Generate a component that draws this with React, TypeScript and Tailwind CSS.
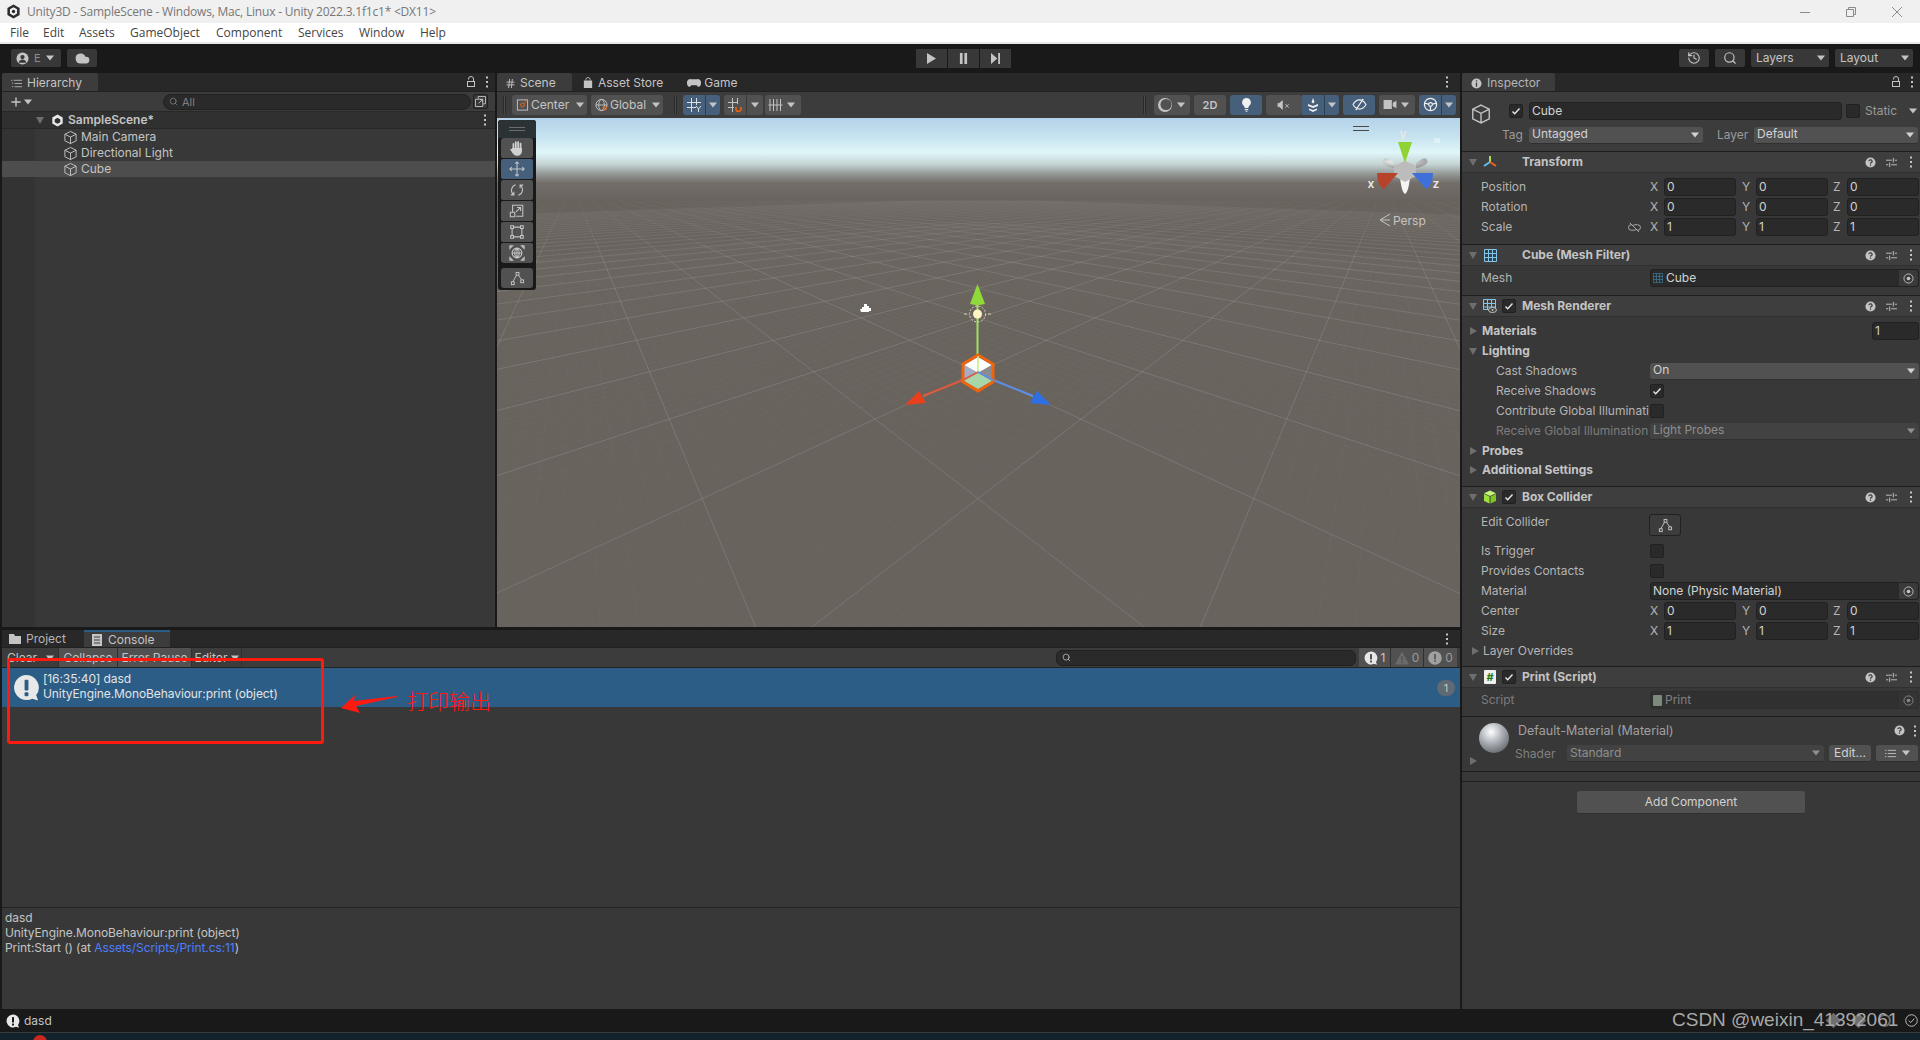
import type { ReactNode } from "react";
import { Search, History, Cloud, Plus, Hash } from "lucide-react";

// shared grid for the scene view: ground plane seen from above, rotated 45deg
const F = 406;
const H = 0.46;
const S = 0.286;
const CX = 978;
const HZ = 185;

function gridLines(step: number, maxC: number, vFar: number) {
  const out: { x1: number; y1: number; x2: number; y2: number; key: string }[] = [];
  const n = Math.round(maxC / step);
  const vNear = 0.12;
  const project = (u: number, v: number) => [CX + (F * u) / v, HZ + (F * H) / v];
  for (let i = -n; i <= n; i++) {
    const c = i * step;
    for (const fam of [1, -1]) {
      // wx = c, wz runs so that v goes from near to far; second family is mirrored
      const end = (v: number) => {
        const wz = (v - 1) * Math.SQRT2 - c;
        const u = (fam * (c - wz)) / Math.SQRT2;
        return project(u, v);
      };
      const [x1, y1] = end(vNear);
      const [x2, y2] = end(vFar);
      out.push({ x1, y1, x2, y2, key: `${fam}-${i}` });
    }
  }
  return out;
}

const minorLines = gridLines(S / 10, 3, 5);
const majorLines = gridLines(S, 9, 12);

function Tri({ dir = "down", className = "" }: { dir?: "down" | "right"; className?: string }) {
  return (
    <svg viewBox="0 0 10 10" className={`w-[10px] h-[10px] shrink-0 ${className}`} fill="currentColor">
      {dir === "down" ? <path d="M1 2h8L5 9z" /> : <path d="M2 1v8l7-4z" />}
    </svg>
  );
}

function Caret({ className = "" }: { className?: string }) {
  return (
    <svg viewBox="0 0 8 6" className={`w-[8px] h-[6px] shrink-0 ${className}`} fill="currentColor">
      <path d="M0 .5h8L4 5.5z" />
    </svg>
  );
}

function Kebab({ className = "" }: { className?: string }) {
  return (
    <svg viewBox="0 0 4 12" className={`w-[4px] h-[12px] shrink-0 ${className}`} fill="#c4c4c4">
      <rect x="1" y="0.5" width="2" height="2" />
      <rect x="1" y="5" width="2" height="2" />
      <rect x="1" y="9.5" width="2" height="2" />
    </svg>
  );
}

function LockOpen({ className = "" }: { className?: string }) {
  return (
    <svg viewBox="0 0 12 12" className={`w-[12px] h-[12px] shrink-0 ${className}`} fill="none" stroke="#c4c4c4">
      <rect x="2.5" y="5.5" width="7" height="5" />
      <path d="M3.500 3.500V3a2.500 2.500 0 0 1 5 0v2.500" />
    </svg>
  );
}

function CubeIcon({ className = "w-[15px] h-[15px]", stroke = "#c4c4c4" }: { className?: string; stroke?: string }) {
  return (
    <svg viewBox="0 0 16 16" className={`shrink-0 ${className}`} fill="none" stroke={stroke} strokeWidth="1">
      <path d="M8 1.500l6 3v7l-6 3-6-3v-7zM2 4.500l6 3 6-3M8 7.500v7" />
    </svg>
  );
}

function Check() {
  return (
    <svg viewBox="0 0 10 10" className="w-[10px] h-[10px]" fill="none" stroke="#e8e8e8" strokeWidth="1.4">
      <path d="M1.500 5.500l2.200 2.200L8.500 2.500" />
    </svg>
  );
}

function CheckBox({ on = false }: { on?: boolean }) {
  return (
    <div className="w-[14px] h-[14px] rounded-[2px] border border-[#212121] flex items-center justify-center shrink-0 bg-[#2a2a2a]">
      {on && <Check />}
    </div>
  );
}

function Help() {
  return (
    <svg viewBox="0 0 12 12" className="w-[11px] h-[11px]">
      <circle cx="6" cy="6" r="5.500" fill="#c4c4c4" />
      <path d="M4.200 4.600a1.800 1.600 0 1 1 2.600 1.500c-.6.4-.8.6-.8 1.200" fill="none" stroke="#3e3e3e" strokeWidth="1.3" />
      <rect x="5.300" y="8.200" width="1.400" height="1.400" fill="#3e3e3e" />
    </svg>
  );
}

function Sliders() {
  return (
    <svg viewBox="0 0 12 12" className="w-[11px] h-[11px]" stroke="#c4c4c4" fill="none">
      <path d="M0 3.500h6.500M9.500 3.500H12M8 1v5M0 8.500h2.500M5.500 8.500H12M4 6v5" />
    </svg>
  );
}

function Target({ dim = false }: { dim?: boolean }) {
  return (
    <div className={`w-[19px] h-full flex items-center justify-center ${dim ? "bg-[#383838] opacity-60" : "bg-[#3a3a3a]"} rounded-r-[3px]`}>
      <svg viewBox="0 0 12 12" className="w-[11px] h-[11px]" fill="none" stroke="#c4c4c4">
        <circle cx="6" cy="6" r="5" />
        <circle cx="6" cy="6" r="2" fill="#c4c4c4" stroke="none" />
      </svg>
    </div>
  );
}

function ObjectField({ children, dim = false }: { children: ReactNode; dim?: boolean }) {
  return (
    <div className={`flex-1 h-[18px] flex items-center justify-between rounded-[3px] border ${dim ? "bg-[#303030] text-[#808080] border-[#2e2e2e]" : "bg-[#2a2a2a] text-[#d2d2d2] border-[#212121]"}`}>
      <div className="flex items-center gap-[3px] pl-[2px]">{children}</div>
      <Target dim={dim} />
    </div>
  );
}

function Dropdown({ label, className = "", dim = false }: { label: string; className?: string; dim?: boolean }) {
  return (
    <div className={`h-[17px] rounded-[3px] flex items-center justify-between pl-[3px] pr-[3px] border-b border-[#303030] ${dim ? "bg-[#424242] text-[#8f8f8f]" : "bg-[#515151] text-[#d2d2d2]"} ${className}`}>
      <span className="leading-none -mt-[1px]">{label}</span>
      <Caret className={dim ? "text-[#8f8f8f] mr-[1px]" : "text-[#d2d2d2] mr-[1px]"} />
    </div>
  );
}

function NumField({ value, className = "w-[72px]" }: { value: string; className?: string }) {
  return (
    <div className={`h-[18px] bg-[#2a2a2a] border border-[#212121] rounded-[3px] flex items-center pl-[2px] text-[#d2d2d2] leading-none ${className}`}>
      {value}
    </div>
  );
}

function VectorFields({ x, y, z }: { x: string; y: string; z: string }) {
  return (
    <div className="flex items-center text-[#b4b4b4]">
      <span className="w-[14px]">X</span>
      <NumField value={x} />
      <span className="w-[14px] ml-[6px]">Y</span>
      <NumField value={y} />
      <span className="w-[14px] ml-[5px]">Z</span>
      <NumField value={z} />
    </div>
  );
}

function Row({ label, indent = false, dim = false, extra, children }: { label: string; indent?: boolean; dim?: boolean; extra?: ReactNode; children?: ReactNode }) {
  return (
    <div className="h-[20px] flex items-center pl-[19px] pr-[1px]">
      <div className={`w-[169px] shrink-0 flex items-center justify-between whitespace-nowrap overflow-hidden ${indent ? "pl-[15px] pr-[2px]" : "pr-[9px]"} ${dim ? "text-[#7c7c7c]" : "text-[#b4b4b4]"}`}>
        <span>{label}</span>
        {extra}
      </div>
      <div className="flex-1 flex items-center min-w-0">{children}</div>
    </div>
  );
}

function Foldout({ label, open = false }: { label: string; open?: boolean }) {
  return (
    <div className="h-[20px] flex items-center pl-[6px]">
      <Tri dir={open ? "down" : "right"} className="text-[#6e6e6e]" />
      <span className="ml-[4px] font-bold text-[#c4c4c4]">{label}</span>
    </div>
  );
}

function CompHeader({ title, icon, check = false }: { title: string; icon: ReactNode; check?: boolean }) {
  return (
    <div className="h-[21px] bg-[#3e3e3e] border-b border-[#303030] flex items-center pl-[6px] pr-[7px]">
      <Tri className="text-[#6e6e6e]" />
      <div className="w-[16px] ml-[4px] flex items-center justify-center">{icon}</div>
      <div className="w-[18px] flex justify-end">{check && <CheckBox on />}</div>
      <span className="ml-[6px] font-bold text-[#c4c4c4]">{title}</span>
      <div className="ml-auto flex items-center gap-[10px]">
        <Help />
        <Sliders />
        <Kebab className="ml-[2px]" />
      </div>
    </div>
  );
}

function MeshGlyph({ stroke = "#7fc7ee", size = 13 }: { stroke?: string; size?: number }) {
  return (
    <svg viewBox="0 0 13 13" width={size} height={size} fill="none" stroke={stroke}>
      <path d="M.5.5h12v12H.5zM4.500.5v12M8.500.5v12M.5 4.500h12M.5 8.500h12" />
    </svg>
  );
}

function InfoBubble({ size = 14, dark = "#191919" }: { size?: number; dark?: string }) {
  return (
    <svg viewBox="0 0 28 28" width={size} height={size}>
      <path d="M14 1a13 13 0 1 0 6 24.600l6 1.900-2-5.600A13 13 0 0 0 14 1z" fill="#e8e8e8" />
      <rect x="12" y="6" width="4" height="11" rx="1" fill={dark} />
      <rect x="12" y="19" width="4" height="4" rx="1" fill={dark} />
    </svg>
  );
}

function TabBar({ children, right, className = "h-[19px]" }: { children: ReactNode; right?: ReactNode; className?: string }) {
  return (
    <div className={`bg-[#282828] flex items-end border-b border-[#212121] shrink-0 ${className}`}>
      {children}
      <div className="ml-auto self-center flex items-center gap-[8px] pr-[6px]">{right}</div>
    </div>
  );
}

function ToolBtn({ children, active = false, className = "" }: { children: ReactNode; active?: boolean; className?: string }) {
  return (
    <div className={`h-[20px] rounded-[3px] flex items-center justify-center text-[#c4c4c4] shrink-0 ${active ? "bg-[#46607c]" : "bg-[#515151]"} ${className}`}>
      {children}
    </div>
  );
}

const Grip = () => <div className="w-[3px] h-[18px] border-x border-[#2a2a2a] bg-[#4a4a4a] shrink-0" />;

function HierRow({ label, selected = false }: { label: string; selected?: boolean }) {
  return (
    <div className={`h-[16px] flex items-center pl-[61px] ${selected ? "bg-[#4d4d4d]" : ""}`}>
      <CubeIcon />
      <span className="ml-[3px] text-[#c4c4c4]">{label}</span>
    </div>
  );
}

function ToolOverlayBtn({ children, active = false, className = "" }: { children: ReactNode; active?: boolean; className?: string }) {
  return (
    <div className={`w-[32px] h-[20px] rounded-[2px] flex items-center justify-center ${active ? "bg-[#46607c]" : "bg-[#515151]"} ${className}`}>
      {children}
    </div>
  );
}

function ToolGlyph({ d }: { d: string }) {
  return (
    <svg viewBox="0 0 18 18" className="w-[16px] h-[16px]" fill="none" stroke="#c4c4c4" strokeWidth="1.2">
      <path d={d} />
    </svg>
  );
}

function HandGlyph() {
  return (
    <svg viewBox="0 0 18 18" className="w-[16px] h-[16px]" fill="none" stroke="#d0d0d0" strokeLinecap="round">
      <path d="M5 10V4.500M7.700 9V2.500M10.300 9V2.500M13 10V4" strokeWidth="2" />
      <path d="M4 9.500h10v3q-.5 4.500-4.500 4.500h-1.500q-2 0-3-2L2 10.500" fill="#d0d0d0" strokeWidth="1.200" />
    </svg>
  );
}

function EditGlyph() {
  return (
    <svg viewBox="0 0 16 16" className="w-[15px] h-[15px]" fill="none" stroke="#c4c4c4">
      <rect x="1.500" y="11.500" width="3" height="3" />
      <rect x="11.500" y="9.500" width="3" height="3" />
      <rect x="6.500" y="1.500" width="3" height="3" />
      <path d="M3 11.500L7 4.500M9 4.500l3.500 5" />
    </svg>
  );
}

function SceneDrawing() {
  return (
    <svg viewBox="497 118 963 509" className="block w-full h-full" preserveAspectRatio="none">
      <defs>
        <linearGradient id="sky" x1="0" y1="118" x2="0" y2="200" gradientUnits="userSpaceOnUse">
          <stop offset="0" stopColor="#b4d2ea" />
          <stop offset="0.22" stopColor="#c6e2ef" />
          <stop offset="0.42" stopColor="#dff6f8" />
          <stop offset="0.56" stopColor="#c6d5d5" />
          <stop offset="0.68" stopColor="#959998" />
          <stop offset="0.79" stopColor="#736e6a" />
          <stop offset="1" stopColor="#69635e" />
        </linearGradient>
        <linearGradient id="haze" x1="0" y1="200" x2="0" y2="265" gradientUnits="userSpaceOnUse">
          <stop offset="0" stopColor="#69635e" stopOpacity="0.75" />
          <stop offset="1" stopColor="#69635e" stopOpacity="0" />
        </linearGradient>
        <radialGradient id="ball" cx="0.35" cy="0.3" r="0.8">
          <stop offset="0" stopColor="#ffffff" />
          <stop offset="1" stopColor="#8e8e8e" />
        </radialGradient>
      </defs>
      <rect x="497" y="118" width="963" height="509" fill="#69635e" />
      {minorLines.map((l) => (
        <line key={`m${l.key}`} x1={l.x1} y1={l.y1} x2={l.x2} y2={l.y2} stroke="#ffffff" strokeOpacity="0.02" />
      ))}
      {majorLines.map((l) => (
        <line key={`M${l.key}`} x1={l.x1} y1={l.y1} x2={l.x2} y2={l.y2} stroke="#ffffff" strokeOpacity="0.11" />
      ))}
      <rect x="497" y="200" width="963" height="65" fill="url(#haze)" />
      <rect x="497" y="118" width="963" height="82" fill="url(#sky)" />

      {/* camera gizmo */}
      <path d="M860 309h2v-2h2v-3h3v2h2v2h2v3h-2v1h-8z" fill="#ffffff" />

      {/* move handles */}
      <path d="M977.500 304V356" stroke="#a4e05a" strokeWidth="2" />
      <path d="M977.500 284L970 304q7.500 2 15 0z" fill="#8fd93a" />
      <path d="M963 380L923 396" stroke="#dd5a3c" strokeWidth="2" />
      <path d="M905 405L919 391l7 12z" fill="#e8401c" />
      <path d="M993 380L1033 396" stroke="#5d8de8" strokeWidth="2" />
      <path d="M1051 405L1037 391l-7 12z" fill="#2f6fe6" />

      {/* sun */}
      <circle cx="977.500" cy="314" r="4.500" fill="#fbf3c4" />
      <g stroke="#ddd6b8" strokeWidth="1" strokeDasharray="2 1.500">
        <circle cx="977.500" cy="314" r="8" fill="none" />
      </g>
      <path d="M967 314h-3M991 314h-3" stroke="#ddd6b8" />

      {/* cube */}
      <path d="M978 357l14 8-14 8-14-8z" fill="#ffffff" />
      <path d="M964 365l14 8v16l-14-8z" fill="#a3aec8" />
      <path d="M992 365l-14 8v16l14-8z" fill="#8f8a8e" />
      <path d="M978 373l14 8-14 8-14-8z" fill="#a7d7a8" />
      <path d="M978 355l15 9v18l-15 9-15-9v-18z" fill="none" stroke="#f0640f" strokeWidth="3" />
      <path d="M978 372v-16" stroke="#bdf07a" strokeWidth="1.500" />
      <path d="M978 372l-15 8" stroke="#dd5a3c" strokeWidth="1.500" />
      <path d="M978 372l15 8" stroke="#5d8de8" strokeWidth="1.500" />

      {/* orientation gizmo */}
      <path d="M1353 126.500h16M1353 130.500h16" stroke="#4a4a4a" />
      <path d="M1394 163c-5-4-9-6-11-3-2 3 3 7 11 8zM1416 163c5-4 9-6 11-3 2 3-3 7-11 8z" fill="url(#ball)" />
      <path d="M1400 178c1 7 2 14 5 16 3-2 4-9 5-16z" fill="#f4f4f4" />
      <path d="M1405 161l11 5v10l-11 6-11-6v-10z" fill="#bcbcbc" />
      <path d="M1398 142h14l-7 21z" fill="#8ed331" />
      <path d="M1377 173h21l-14 16q-7-4-7-16z" fill="#b8432b" />
      <path d="M1412 173h21q0 12-7 16z" fill="#3f6fd8" />
      <rect x="1434" y="138" width="6" height="5" fill="#ffffff" fillOpacity="0.35" />
      <g fontFamily="Inter, sans-serif" fontSize="12" fill="#e8e8e8" fontWeight="600" textAnchor="middle">
        <text x="1403" y="138">y</text>
        <text x="1371" y="188">x</text>
        <text x="1436" y="188">z</text>
      </g>
      <path d="M1390 214l-10 6 10 6M1390 220h-9" fill="none" stroke="#c4c4c4" />
      <text x="1393" y="225" fontFamily="Inter, sans-serif" fontSize="12" fill="#c8c4c0">Persp</text>
    </svg>
  );
}

export default function App() {
  return (
    <div className="w-[1920px] h-[1040px] flex flex-col overflow-hidden bg-[#191919] font-[Inter,sans-serif] text-[12px] text-[#c4c4c4] leading-[16px]">
      {/* Window title */}
      <div className="h-[23px] shrink-0 bg-[#f0f0f0] flex items-center pl-[6px] font-['Open_Sans',sans-serif] text-[12px] text-[#777777]">
        <svg viewBox="0 0 16 16" className="w-[15px] h-[15px]">
          <path d="M8 .5l6.500 3.700v7.600L8 15.500 1.500 11.800V4.200z" fill="#2b2b2b" />
          <path d="M8 3.500l3.800 2.200v4.500L8 12.500l-3.800-2.300V5.700z" fill="#f0f0f0" />
          <circle cx="8" cy="8" r="1.800" fill="#2b2b2b" />
        </svg>
        <span className="ml-[6px] tracking-[-0.2px]">Unity3D - SampleScene - Windows, Mac, Linux - Unity 2022.3.1f1c1* &lt;DX11&gt;</span>
        <div className="ml-auto flex items-center gap-[36px] pr-[18px]">
          <svg viewBox="0 0 10 10" className="w-[10px] h-[10px]" stroke="#8a8a8a" fill="none"><path d="M0 5.500h10" /></svg>
          <svg viewBox="0 0 10 10" className="w-[10px] h-[10px]" stroke="#8a8a8a" fill="none"><path d="M.5 2.500h7v7h-7zM2.500 2.500v-2h7v7h-2" /></svg>
          <svg viewBox="0 0 10 10" className="w-[10px] h-[10px]" stroke="#8a8a8a" fill="none"><path d="M0 0l10 10M10 0L0 10" /></svg>
        </div>
      </div>

      {/* Menu */}
      <div className="h-[19px] shrink-0 bg-white flex items-center font-['Open_Sans',sans-serif] text-[12px] text-[#444444]">
        {[
          ["File", "w-[33px]"],
          ["Edit", "w-[36px]"],
          ["Assets", "w-[51px]"],
          ["GameObject", "w-[86px]"],
          ["Component", "w-[82px]"],
          ["Services", "w-[61px]"],
          ["Window", "w-[61px]"],
          ["Help", "w-[40px]"],
        ].map(([m, w], i) => (
          <span key={m} className={`${w} ${i === 0 ? "ml-[10px]" : ""}`}>{m}</span>
        ))}
      </div>

      {/* Main toolbar */}
      <div className="h-[31px] shrink-0 bg-[#191919] border-t-2 border-white/90 flex items-center pl-[11px] pr-[7px] pb-[1px] relative">
        <div className="w-[50px] h-[18px] bg-[#383838] rounded-[2px] flex items-center pl-[5px] gap-[5px]">
          <svg viewBox="0 0 14 14" className="w-[13px] h-[13px]"><circle cx="7" cy="7" r="6.500" fill="#c4c4c4" /><circle cx="7" cy="5.500" r="2.300" fill="#383838" /><path d="M2.800 11.500c.6-2.500 2.500-3.500 4.200-3.500s3.600 1 4.200 3.500z" fill="#383838" /></svg>
          <span className="text-[#8f8f8f] text-[11px]">E</span>
          <Caret className="text-[#c4c4c4] w-[7px]" />
        </div>
        <div className="ml-[6px] w-[30px] h-[18px] bg-[#383838] rounded-[2px] flex items-center justify-center">
          <Cloud size={15} fill="#c4c4c4" stroke="#c4c4c4" />
        </div>
        <div className="ml-[819px] flex gap-[1px]">
          <div className="w-[31px] h-[19px] bg-[#383838] flex items-center justify-center"><svg viewBox="0 0 10 12" className="w-[9px] h-[11px]" fill="#c4c4c4"><path d="M0 0l10 6-10 6z" /></svg></div>
          <div className="w-[31px] h-[19px] bg-[#383838] flex items-center justify-center"><svg viewBox="0 0 10 12" className="w-[9px] h-[11px]" fill="#c4c4c4"><path d="M1 0h3v12H1zM6 0h3v12H6z" /></svg></div>
          <div className="w-[31px] h-[19px] bg-[#383838] flex items-center justify-center"><svg viewBox="0 0 10 12" className="w-[9px] h-[11px]" fill="#c4c4c4"><path d="M0 0l7 6-7 6zM8 0h2v12H8z" /></svg></div>
        </div>
        <div className="ml-auto flex items-center gap-[6px]">
          <div className="w-[30px] h-[18px] bg-[#383838] rounded-[2px] flex items-center justify-center"><History size={14} /></div>
          <div className="w-[30px] h-[18px] bg-[#383838] rounded-[2px] flex items-center justify-center"><Search size={14} /></div>
          <div className="w-[78px] h-[18px] bg-[#383838] rounded-[2px] flex items-center justify-between pl-[5px] pr-[4px]"><span>Layers</span><Caret /></div>
          <div className="w-[78px] h-[18px] bg-[#383838] rounded-[2px] flex items-center justify-between pl-[5px] pr-[4px]"><span>Layout</span><Caret /></div>
        </div>
      </div>

      <div className="flex-1 min-h-0 flex pl-[2px]">
        {/* Left + centre + console */}
        <div className="w-[1458px] shrink-0 flex flex-col">
          <div className="h-[554px] shrink-0 flex">
            {/* Hierarchy */}
            <div className="w-[493px] shrink-0 flex flex-col bg-[#383838]">
              <TabBar right={<><LockOpen /><Kebab /></>}>
                <div className="w-[96px] h-full bg-[#3c3c3c] rounded-t-[2px] flex items-center pl-[9px] pt-[2px] gap-[5px]">
                  <svg viewBox="0 0 12 12" className="w-[11px] h-[11px]" stroke="#b4b4b4" fill="none"><path d="M3 2.500h9M4 6h8M4 9.500h8M0 2.500h1.500M1 5.500h1.500M1 9.500h1.500" /></svg>
                  <span>Hierarchy</span>
                </div>
              </TabBar>
              <div className="h-[20px] bg-[#3c3c3c] flex items-center border-b border-[#282828] pl-[7px]">
                <Plus size={14} strokeWidth={2.4} />
                <Caret className="ml-[1px] w-[7px]" />
                <div className="ml-[131px] w-[308px] h-[16px] bg-[#2a2a2a] rounded-[8px] border border-[#212121] flex items-center pl-[5px] text-[#808080] gap-[4px]">
                  <Search size={9} />
                  <span className="text-[11px]">All</span>
                </div>
                <div className="ml-[2px] w-[15px] h-[15px] bg-[#383838] border border-[#212121] rounded-[2px] flex items-center justify-center">
                  <svg viewBox="0 0 12 12" className="w-[11px] h-[11px]" fill="none" stroke="#c4c4c4"><path d="M3.500 3V.5h8v8H9M.5 3.500h8v8h-8zM4 8l4-4M5.500 4H8v2.500" /></svg>
                </div>
              </div>
              <div className="flex-1 flex relative">
                <div className="w-[33px] bg-[#333333] shrink-0" />
                <div className="absolute inset-0">
                  <div className="h-[17px] bg-[#303030] border-b border-[#282828] flex items-center pl-[33px] pr-[8px]">
                    <Tri className="text-[#6e6e6e] w-[9px] h-[9px]" />
                    <svg viewBox="0 0 14 14" className="ml-[6px] w-[13px] h-[13px]"><path d="M7 .5l5.600 3.200v6.600L7 13.500 1.400 10.300V3.700z" fill="#e8e8e8" /><path d="M7 4L10 5.800v3L7 10.500 4 8.800v-3z" fill="#303030" /></svg>
                    <span className="ml-[4px] font-semibold">SampleScene*</span>
                    <Kebab className="ml-auto" />
                  </div>
                  <HierRow label="Main Camera" />
                  <HierRow label="Directional Light" />
                  <HierRow label="Cube" selected />
                </div>
              </div>
            </div>
            <div className="w-[2px] bg-[#191919] shrink-0" />

            {/* Scene */}
            <div className="flex-1 min-w-0 flex flex-col">
              <TabBar right={<Kebab className="mr-[5px]" />}>
                <div className="w-[75px] h-full bg-[#3c3c3c] rounded-t-[2px] flex items-center pl-[8px] pt-[2px] gap-[4px]">
                  <Hash size={11} />
                  <span>Scene</span>
                </div>
                <div className="h-full flex items-center pl-[11px] pt-[2px] gap-[5px]">
                  <svg viewBox="0 0 12 14" className="w-[10px] h-[12px]"><path d="M1 4h10v9H1z" fill="#c4c4c4" /><path d="M3.500 4V2.500a2.500 2 0 0 1 5 0V4" fill="none" stroke="#c4c4c4" /></svg>
                  <span>Asset Store</span>
                </div>
                <div className="h-full flex items-center pl-[24px] pt-[2px] gap-[3px]">
                  <svg viewBox="0 0 16 10" className="w-[14px] h-[9px]"><path d="M4 0h8a4 4 0 0 1 4 5c-.3 3-2 5-4 3l-1-1H5L4 8C2 10 .3 8 0 5a4 4 0 0 1 4-5z" fill="#c4c4c4" /></svg>
                  <span>Game</span>
                </div>
              </TabBar>
              <div className="h-[26px] bg-[#3c3c3c] flex items-center shrink-0 pb-[1px] pl-[6px] pr-[4px]">
                <Grip />
                <ToolBtn className="ml-[6px] w-[75px] justify-start pl-[4px] gap-[2px]">
                  <svg viewBox="0 0 14 14" className="w-[13px] h-[14px]" fill="none"><rect x="1.500" y="1.500" width="11" height="11" stroke="#c4c4c4" /><circle cx="7" cy="7" r="2" stroke="#f0640f" /><path d="M8.500 5.500L12 2" stroke="#f0640f" /></svg>
                  <span>Center</span>
                  <Caret className="ml-auto mr-[3px]" />
                </ToolBtn>
                <ToolBtn className="ml-[4px] w-[72px] justify-start pl-[4px] gap-[2px]">
                  <svg viewBox="0 0 14 14" className="w-[13px] h-[14px]" fill="none" stroke="#c4c4c4"><circle cx="7" cy="7" r="6" /><ellipse cx="7" cy="7" rx="3" ry="6" /><path d="M1 7h12" /><circle cx="10.500" cy="10.500" r="2" stroke="#f0640f" /></svg>
                  <span>Global</span>
                  <Caret className="ml-auto mr-[3px]" />
                </ToolBtn>
                <div className="ml-[11px]"><Grip /></div>
                <ToolBtn active className="ml-[6px] w-[37px] justify-start">
                  <div className="w-[23px] flex justify-center border-r border-[#2d3f52] h-full items-center">
                    <svg viewBox="0 0 14 14" className="w-[14px] h-[14px]" fill="none" stroke="#e0e0e0"><path d="M0 4.500h14M0 9.500h9M4.500 0v14M9.500 0v7" /><path d="M9 8l2.500 3L14 8M11.500 11v3" /></svg>
                  </div>
                  <Caret className="ml-[3px]" />
                </ToolBtn>
                <ToolBtn className="ml-[4px] w-[39px] justify-start">
                  <div className="w-[23px] flex justify-center border-r border-[#3a3a3a] h-full items-center">
                    <svg viewBox="0 0 14 14" className="w-[14px] h-[14px]" fill="none" stroke="#c4c4c4"><path d="M0 4.500h10M0 9.500h6M4.500 0v14M9.500 0v6" /><path d="M8 9v2a2.500 2.500 0 0 0 5 0V9" stroke="#f0640f" strokeWidth="1.500" /></svg>
                  </div>
                  <Caret className="ml-[4px]" />
                </ToolBtn>
                <ToolBtn className="ml-[2px] w-[36px] justify-start pl-[3px]">
                  <svg viewBox="0 0 14 14" className="w-[15px] h-[14px]" fill="none" stroke="#c4c4c4"><path d="M1.500 1v12M5 1v12M8.500 1v12M12 1v12M0 7h14" /></svg>
                  <Caret className="ml-[4px]" />
                </ToolBtn>
                <div className="ml-auto mr-[8px]"><Grip /></div>
                <ToolBtn className="w-[36px] justify-start pl-[3px]">
                  <svg viewBox="0 0 16 16" className="w-[16px] h-[16px]"><circle cx="8" cy="8" r="7" fill="#c4c4c4" /><circle cx="9" cy="7.500" r="5.500" fill="#515151" /></svg>
                  <Caret className="ml-[4px]" />
                </ToolBtn>
                <ToolBtn className="ml-[4px] w-[32px]"><span className="text-[11px] font-semibold">2D</span></ToolBtn>
                <ToolBtn active className="ml-[4px] w-[32px]">
                  <svg viewBox="0 0 12 16" className="w-[11px] h-[14px]" fill="#f0f0f0"><path d="M6 0a5 5 0 0 1 3 9c-.7.6-1 1.500-1 2.500H4c0-1-.3-1.900-1-2.500A5 5 0 0 1 6 0zM4 12.500h4V14H4zM5 15h2v1H5z" /></svg>
                </ToolBtn>
                <ToolBtn className="ml-[4px] w-[36px]">
                  <svg viewBox="0 0 16 14" className="w-[14px] h-[12px]" fill="none" stroke="#c4c4c4"><path d="M1 5h2l3-3v10L3 9H1z" fill="#c4c4c4" /><path d="M9.500 6l4 4M13.500 6l-4 4" /></svg>
                </ToolBtn>
                <ToolBtn active className="w-[37px] justify-start rounded-l-none">
                  <div className="w-[23px] flex justify-center border-r border-[#2d3f52] h-full items-center">
                    <svg viewBox="0 0 14 14" className="w-[14px] h-[14px]" fill="#f0f0f0"><path d="M7 0l1.500 4L7 5.500 5.500 4zM2 6l5 2 5-2v2l-5 2-5-2zM3 10.500l4 1.500 4-1.500V12l-4 2-4-2z" /></svg>
                  </div>
                  <Caret className="ml-[3px]" />
                </ToolBtn>
                <ToolBtn active className="ml-[4px] w-[32px]">
                  <svg viewBox="0 0 16 14" className="w-[15px] h-[13px]" fill="none" stroke="#f0f0f0" strokeWidth="1.200"><path d="M1 7c2-3.500 4.500-5 7-5s5 1.500 7 5c-2 3.500-4.500 5-7 5s-5-1.500-7-5zM12 1L4 13" /></svg>
                </ToolBtn>
                <ToolBtn className="ml-[4px] w-[36px] justify-start pl-[4px]">
                  <svg viewBox="0 0 14 12" className="w-[14px] h-[11px]" fill="#c4c4c4"><path d="M0 1h9v10H0zM10 4l4-2v8l-4-2z" /></svg>
                  <Caret className="ml-[4px]" />
                </ToolBtn>
                <ToolBtn active className="ml-[4px] w-[37px] justify-start">
                  <div className="w-[23px] flex justify-center border-r border-[#2d3f52] h-full items-center">
                    <svg viewBox="0 0 16 16" className="w-[15px] h-[15px]" fill="none" stroke="#f0f0f0" strokeWidth="1.300"><circle cx="8" cy="8" r="6.500" /><circle cx="8" cy="8" r="2" /><path d="M1.500 6.500L6 7.500M14.500 6.500L10 7.500M8 10v4.500" /></svg>
                  </div>
                  <Caret className="ml-[3px]" />
                </ToolBtn>
              </div>
              <div className="flex-1 min-h-0 relative bg-[#69635e]">
                <SceneDrawing />
                {/* tools overlay */}
                <div className="absolute left-[1px] top-[2px] w-[38px] h-[170px] bg-[#191919] rounded-[3px] flex flex-col items-center">
                  <div className="w-full h-[18px] bg-[#2a3236] rounded-t-[3px] flex flex-col items-center justify-center gap-[2px]">
                    <div className="w-[16px] h-[1px] bg-[#6b6b6b]" />
                    <div className="w-[16px] h-[1px] bg-[#6b6b6b]" />
                  </div>
                  <div className="flex flex-col gap-[1px]">
                    <ToolOverlayBtn className="rounded-t-[3px]"><HandGlyph /></ToolOverlayBtn>
                    <ToolOverlayBtn active>
                      <ToolGlyph d="M9 1v16M1 9h16M7 3l2-2 2 2M7 15l2 2 2-2M3 7L1 9l2 2M15 7l2 2-2 2" />
                    </ToolOverlayBtn>
                    <ToolOverlayBtn>
                      <ToolGlyph d="M7.500 3A6.500 6.500 0 0 0 5.500 14.500M5.500 11v3.500H2M10.500 15A6.500 6.500 0 0 0 12.500 3.500M12.500 7V3.500H16" />
                    </ToolOverlayBtn>
                    <ToolOverlayBtn>
                      <ToolGlyph d="M4 10V2.500h11.500V15H8M1.500 10.500h5v5h-5zM8 10l5-5M9 5h4v4" />
                    </ToolOverlayBtn>
                    <ToolOverlayBtn>
                      <ToolGlyph d="M2 2h3v3H2zM13 2h3v3h-3zM2 13h3v3H2zM13 13h3v3h-3zM5 3.500h8M5 14.500h8M3.500 5v8M14.500 5v8" />
                    </ToolOverlayBtn>
                    <ToolOverlayBtn className="rounded-b-[3px]">
                      <ToolGlyph d="M9 3.500a5.500 5.500 0 1 0 0 11 5.500 5.500 0 0 0 0-11zM9 3.500v11M3.500 9h11M9 3.500c-3.500 3-3.500 8 0 11M9 3.500c3.500 3 3.500 8 0 11M1 1h3L1 4zM17 1v3l-3-3zM1 17v-3l3 3zM17 17h-3l3-3z" />
                    </ToolOverlayBtn>
                  </div>
                  <ToolOverlayBtn className="mt-[5px] rounded-[3px]"><EditGlyph /></ToolOverlayBtn>
                </div>
              </div>
            </div>
          </div>
          <div className="h-[3px] bg-[#191919] shrink-0" />

          {/* Console */}
          <div className="flex-1 min-h-0 flex flex-col bg-[#383838] relative">
            <TabBar right={<Kebab className="mr-[5px]" />} className="h-[18px]">
              <div className="w-[82px] h-full flex items-center pl-[7px] gap-[5px] text-[#b4b4b4]">
                <svg viewBox="0 0 12 10" className="w-[12px] h-[10px]" fill="#c4c4c4"><path d="M0 0h5l1 2h6v8H0z" /></svg>
                <span>Project</span>
              </div>
              <div className="w-[86px] h-full bg-[#3c3c3c] border-t-2 border-[#2c5d87] flex items-center pl-[8px] gap-[6px]">
                <svg viewBox="0 0 10 12" className="w-[10px] h-[12px]"><rect width="10" height="12" fill="#c4c4c4" /><path d="M2 3h6M2 6h6M2 9h6" stroke="#3c3c3c" /></svg>
                <span>Console</span>
              </div>
            </TabBar>
            <div className="h-[20px] bg-[#3c3c3c] flex items-center border-b border-[#232323] shrink-0">
              <div className="w-[57px] h-full pl-[5px] flex items-center border-r border-[#303030]">
                <span className="w-[35px]">Clear</span>
                <Caret className="ml-[4px]" />
              </div>
              <div className="w-[59px] h-full bg-[#515151] flex items-center justify-center border-r border-[#303030]">Collapse</div>
              <div className="w-[74px] h-full bg-[#515151] flex items-center justify-center border-r border-[#303030]">Error Pause</div>
              <div className="w-[50px] h-full flex items-center justify-center gap-[3px] border-r border-[#303030]">Editor <Caret /></div>
              <div className="ml-[814px] w-[300px] h-[16px] bg-[#2a2a2a] border border-[#212121] rounded-[6px] flex items-center pl-[5px]">
                <Search size={9} />
              </div>
              <div className="ml-[3px] flex h-full">
                <div className="w-[32px] bg-[#515151] border-r border-[#303030] flex items-center justify-center gap-[3px]"><InfoBubble size={14} dark="#515151" /><span className="text-[#c4c4c4]">1</span></div>
                <div className="w-[33px] bg-[#515151] border-r border-[#303030] flex items-center justify-center gap-[3px]">
                  <svg viewBox="0 0 14 14" className="w-[14px] h-[14px]"><path d="M7 .5L14 13.500H0z" fill="#6b6b6b" /><path d="M6.300 5h1.400v4.500H6.300zM6.300 10.500h1.400V12H6.300z" fill="#515151" /></svg>
                  <span className="text-[#9a9a9a]">0</span>
                </div>
                <div className="w-[33px] bg-[#515151] flex items-center justify-center gap-[3px]">
                  <svg viewBox="0 0 14 14" className="w-[14px] h-[14px]"><circle cx="7" cy="7" r="6.800" fill="#a0a0a0" /><path d="M6.200 3h1.600v5.500H6.200zM6.200 9.500h1.600V11H6.200z" fill="#515151" /></svg>
                  <span className="text-[#9a9a9a]">0</span>
                </div>
              </div>
            </div>
            <div className="h-[39px] bg-[#2c5d87] flex items-center pl-[11px] pr-[5px] shrink-0">
              <InfoBubble size={27} dark="#2c5d87" />
              <div className="ml-[3px] -mt-[3px] text-[#e4e4e4] leading-[15px] tracking-[-0.08px]">
                <div>[16:35:40] dasd</div>
                <div>UnityEngine.MonoBehaviour:print (object)</div>
              </div>
              <div className="ml-auto w-[18px] h-[16px] rounded-full bg-[#5f6a72] flex items-center justify-center text-[#c4c4c4] text-[11px]">1</div>
            </div>
            <div className="flex-1" />
            <div className="h-[102px] shrink-0 border-t border-[#232323] pl-[3px] pt-[2px] text-[#c4c4c4] leading-[15px] tracking-[-0.08px]">
              <div>dasd</div>
              <div>UnityEngine.MonoBehaviour:print (object)</div>
              <div>Print:Start () (at <span className="text-[#4c7eff]">Assets/Scripts/Print.cs:11</span>)</div>
            </div>

            {/* annotation drawn over the screenshot */}
            <div className="absolute left-[5px] top-[28px] w-[317px] h-[86px] border-[3px] border-[#ff1a0f] rounded-[3px]" />
            <svg viewBox="0 0 60 20" className="absolute left-[339px] top-[64px] w-[60px] h-[20px]"><path d="M0 14L14 1l-1 6 43-5v1L15 12l4 7z" fill="#ff1a0f" /></svg>
            <span className="absolute left-[405px] top-[56px] text-[21px] leading-[28px] text-[#ff1a0f] font-['Noto_Sans_CJK_SC',sans-serif] font-light">打印输出</span>
          </div>
        </div>
        <div className="w-[2px] bg-[#191919] shrink-0" />

        {/* Inspector */}
        <div className="flex-1 min-w-0 flex flex-col bg-[#383838]">
          <TabBar right={<><LockOpen /><Kebab /></>}>
            <div className="w-[93px] h-full bg-[#3c3c3c] rounded-t-[2px] flex items-center pl-[9px] pt-[2px] gap-[5px] text-[#b4b4b4]">
              <svg viewBox="0 0 12 12" className="w-[11px] h-[11px]"><circle cx="6" cy="6" r="5.500" fill="#c4c4c4" /><path d="M5.300 2.500h1.400v1.400H5.300zM5.300 5h1.400v4.500H5.300z" fill="#3c3c3c" /></svg>
              <span>Inspector</span>
            </div>
          </TabBar>

          {/* object header */}
          <div className="h-[59px] bg-[#3c3c3c] flex shrink-0">
            <div className="w-[40px] pl-[8px] pt-[11px] relative">
              <CubeIcon className="w-[22px] h-[22px]" />
            </div>
            <div className="flex-1 min-w-0 pt-[10px] pr-[2px]">
              <div className="h-[18px] flex items-center">
                <div className="ml-[7px]"><CheckBox on /></div>
                <div className="ml-[6px] w-[313px] h-[18px] bg-[#2a2a2a] border border-[#212121] rounded-[3px] flex items-center pl-[2px] text-[#d2d2d2]">Cube</div>
                <div className="ml-[4px]"><CheckBox /></div>
                <span className="ml-[5px] text-[#9a9a9a]">Static</span>
                <Caret className="ml-auto mr-[1px]" />
              </div>
              <div className="h-[18px] mt-[6px] flex items-center">
                <span className="w-[27px] text-[#9a9a9a]">Tag</span>
                <Dropdown label="Untagged" className="w-[174px]" />
                <span className="ml-[14px] w-[37px] text-[#9a9a9a]">Layer</span>
                <Dropdown label="Default" className="flex-1" />
              </div>
            </div>
          </div>

          {/* Transform */}
          <div className="border-t border-[#1e1e1e] shrink-0">
            <CompHeader
              title="Transform"
              icon={
                <svg viewBox="0 0 14 14" className="w-[14px] h-[14px]" strokeWidth="2" fill="none">
                  <path d="M7 7V1" stroke="#a4e05a" />
                  <path d="M7 7l-6 4" stroke="#5cc0f0" />
                  <path d="M7 7l6 4" stroke="#f0641e" />
                </svg>
              }
            />
            <div className="pt-[4px] pb-[7px]">
              <Row label="Position"><VectorFields x="0" y="0" z="0" /></Row>
              <Row label="Rotation"><VectorFields x="0" y="0" z="0" /></Row>
              <Row
                label="Scale"
                extra={
                  <svg viewBox="0 0 14 12" className="w-[13px] h-[11px]" fill="none" stroke="#b4b4b4"><path d="M4.500 3h-1a3 3 0 0 0 0 6h3a3 3 0 0 0 2-.8M9.500 9h1a3 3 0 0 0 0-6h-3a3 3 0 0 0-2 .8M2 1l10 10" /></svg>
                }
              >
                <VectorFields x="1" y="1" z="1" />
              </Row>
            </div>
          </div>

          {/* Mesh Filter */}
          <div className="border-t border-[#1e1e1e] shrink-0">
            <CompHeader title="Cube (Mesh Filter)" icon={<MeshGlyph />} />
            <div className="pt-[2px] pb-[7px]">
              <Row label="Mesh">
                <ObjectField><MeshGlyph size={10} stroke="#3d7a9a" /><span>Cube</span></ObjectField>
              </Row>
            </div>
          </div>

          {/* Mesh Renderer */}
          <div className="border-t border-[#1e1e1e] shrink-0">
            <CompHeader
              title="Mesh Renderer"
              check
              icon={
                <svg viewBox="0 0 14 14" className="w-[14px] h-[14px]" fill="none" stroke="#7fc7ee">
                  <path d="M.5.5h12v10H.5zM4.500.5v10M8.500.5v10M.5 4.500h12M.5 8h12" />
                  <ellipse cx="9.500" cy="11" rx="4" ry="2.500" fill="#3e3e3e" stroke="#c4c4c4" />
                  <circle cx="9.500" cy="11" r="1" fill="#c4c4c4" stroke="none" />
                </svg>
              }
            />
            <div className="pt-[4px] pb-[6px]">
              <div className="h-[20px] flex items-center pl-[6px] pr-[1px]">
                <Tri dir="right" className="text-[#6e6e6e]" />
                <span className="ml-[4px] font-bold">Materials</span>
                <NumField value="1" className="ml-auto w-[47px]" />
              </div>
              <Foldout label="Lighting" open />
              <Row label="Cast Shadows" indent><Dropdown label="On" className="flex-1" /></Row>
              <Row label="Receive Shadows" indent><CheckBox on /></Row>
              <Row label="Contribute Global Illuminati" indent><CheckBox /></Row>
              <Row label="Receive Global Illumination" indent dim><Dropdown label="Light Probes" dim className="flex-1" /></Row>
              <Foldout label="Probes" />
              <div className="-mt-[1px]"><Foldout label="Additional Settings" /></div>
            </div>
          </div>

          {/* Box Collider */}
          <div className="border-t border-[#1e1e1e] shrink-0">
            <CompHeader
              title="Box Collider"
              check
              icon={
                <svg viewBox="0 0 14 14" className="w-[14px] h-[14px]">
                  <path d="M7 .5l6 2.800L7 6 1 3.300z" fill="#c3f57a" />
                  <path d="M1 4l5.500 2.600v7L1 11z" fill="#9ae13c" />
                  <path d="M13 4L7.500 6.600v7L13 11z" fill="#7fc528" />
                </svg>
              }
            />
            <div className="pt-[6px] pb-[5px]">
              <div className="h-[22px] flex items-start pl-[19px]">
                <span className="w-[168px] text-[#b4b4b4] leading-[16px]">Edit Collider</span>
                <div className="w-[32px] h-[22px] bg-[#3c3c3c] border border-[#212121] rounded-[3px] flex items-center justify-center"><EditGlyph /></div>
              </div>
              <div className="h-[5px]" />
              <Row label="Is Trigger"><CheckBox /></Row>
              <Row label="Provides Contacts"><CheckBox /></Row>
              <Row label="Material"><ObjectField><span>None (Physic Material)</span></ObjectField></Row>
              <Row label="Center"><VectorFields x="0" y="0" z="0" /></Row>
              <Row label="Size"><VectorFields x="1" y="1" z="1" /></Row>
              <div className="h-[20px] flex items-center pl-[8px]">
                <Tri dir="right" className="text-[#6e6e6e]" />
                <span className="ml-[3px] text-[#b4b4b4]">Layer Overrides</span>
              </div>
            </div>
          </div>

          {/* Print script */}
          <div className="border-t border-[#1e1e1e] shrink-0">
            <CompHeader
              title="Print (Script)"
              check
              icon={
                <div className="w-[12px] h-[14px] bg-[#f0f0f0] rounded-[1px] flex items-center justify-center text-[#1f7a1f] text-[11px] font-bold leading-none">#</div>
              }
            />
            <div className="pt-[2px] pb-[6px]">
              <Row label="Script" dim>
                <ObjectField dim>
                  <div className="w-[9px] h-[11px] bg-[#7c8a7c] rounded-[1px]" />
                  <span>Print</span>
                </ObjectField>
              </Row>
            </div>
          </div>

          {/* Material */}
          <div className="border-t border-[#1e1e1e] h-[55px] shrink-0 flex relative">
            <div className="w-[17px] flex items-end pb-[5px] pl-[6px]"><Tri dir="right" className="text-[#6e6e6e]" /></div>
            <div className="mt-[6px] w-[30px] h-[30px] rounded-full bg-[radial-gradient(circle_at_40%_30%,#ffffff,#aeb2b8_40%,#555a60_90%)]" />
            <div className="flex-1 min-w-0 pl-[6px] pr-[2px]">
              <div className="h-[27px] flex items-center pr-[1px]">
                <span className="ml-[3px] text-[#a0a0a0] text-[12.500px]">Default-Material (Material)</span>
                <div className="ml-auto flex items-center gap-[8px]"><Help /><Kebab /></div>
              </div>
              <div className="flex items-center mt-[1px]">
                <span className="w-[52px] text-[#808080]">Shader</span>
                <Dropdown label="Standard" dim className="w-[257px]" />
                <div className="ml-[5px] w-[42px] h-[17px] bg-[#515151] rounded-[3px] border-b border-[#303030] flex items-center justify-center text-[#d2d2d2]">Edit...</div>
                <div className="ml-[5px] w-[42px] h-[17px] bg-[#515151] rounded-[3px] border-b border-[#303030] flex items-center justify-center gap-[6px]">
                  <svg viewBox="0 0 12 10" className="w-[11px] h-[9px]" stroke="#c4c4c4" fill="none"><path d="M3 1.500h9M3 5h9M3 8.500h9M0 1.500h1.500M0 5h1.500M0 8.500h1.500" /></svg>
                  <Caret />
                </div>
              </div>
            </div>
          </div>
          <div className="h-[11px] border-y border-[#1e1e1e] shrink-0" />
          <div className="flex justify-center pt-[9px]">
            <div className="w-[228px] h-[23px] bg-[#515151] rounded-[3px] border-b border-[#303030] flex items-center justify-center text-[#d2d2d2]">Add Component</div>
          </div>
        </div>
      </div>

      {/* Status bar */}
      <div className="h-[23px] shrink-0 bg-[#191919] flex items-center pl-[6px] relative text-[#c4c4c4]">
        <InfoBubble size={14} />
        <span className="ml-[4px]">dasd</span>
        <div className="ml-auto flex items-center gap-[14px] pr-[2px] text-[#8a8a8a]">
          <div className="w-[11px] h-[11px] bg-[#6e6e6e] rotate-45" />
          <div className="w-[11px] h-[11px] bg-[#6e6e6e] rotate-45" />
          <div className="w-[13px] h-[13px] rounded-full border-2 border-[#6e6e6e]" />
          <svg viewBox="0 0 14 14" className="w-[13px] h-[13px]" fill="none" stroke="#c4c4c4"><circle cx="7" cy="7" r="6.200" /><path d="M4 7l2.200 2.200L10 5" /></svg>
        </div>
        <span className="absolute left-[1672px] top-[1px] font-['Liberation_Sans',sans-serif] text-[19px] leading-[20px] text-[#a8a8a8] whitespace-nowrap">CSDN @weixin_41392061</span>
      </div>
      <div className="h-[8px] shrink-0 bg-[#12232e] border-t border-[#3a3a3a] flex">
        <div className="ml-[33px] w-[14px] h-[7px] rounded-t-full bg-[#c8281e] mt-[2px]" />
      </div>
    </div>
  );
}
